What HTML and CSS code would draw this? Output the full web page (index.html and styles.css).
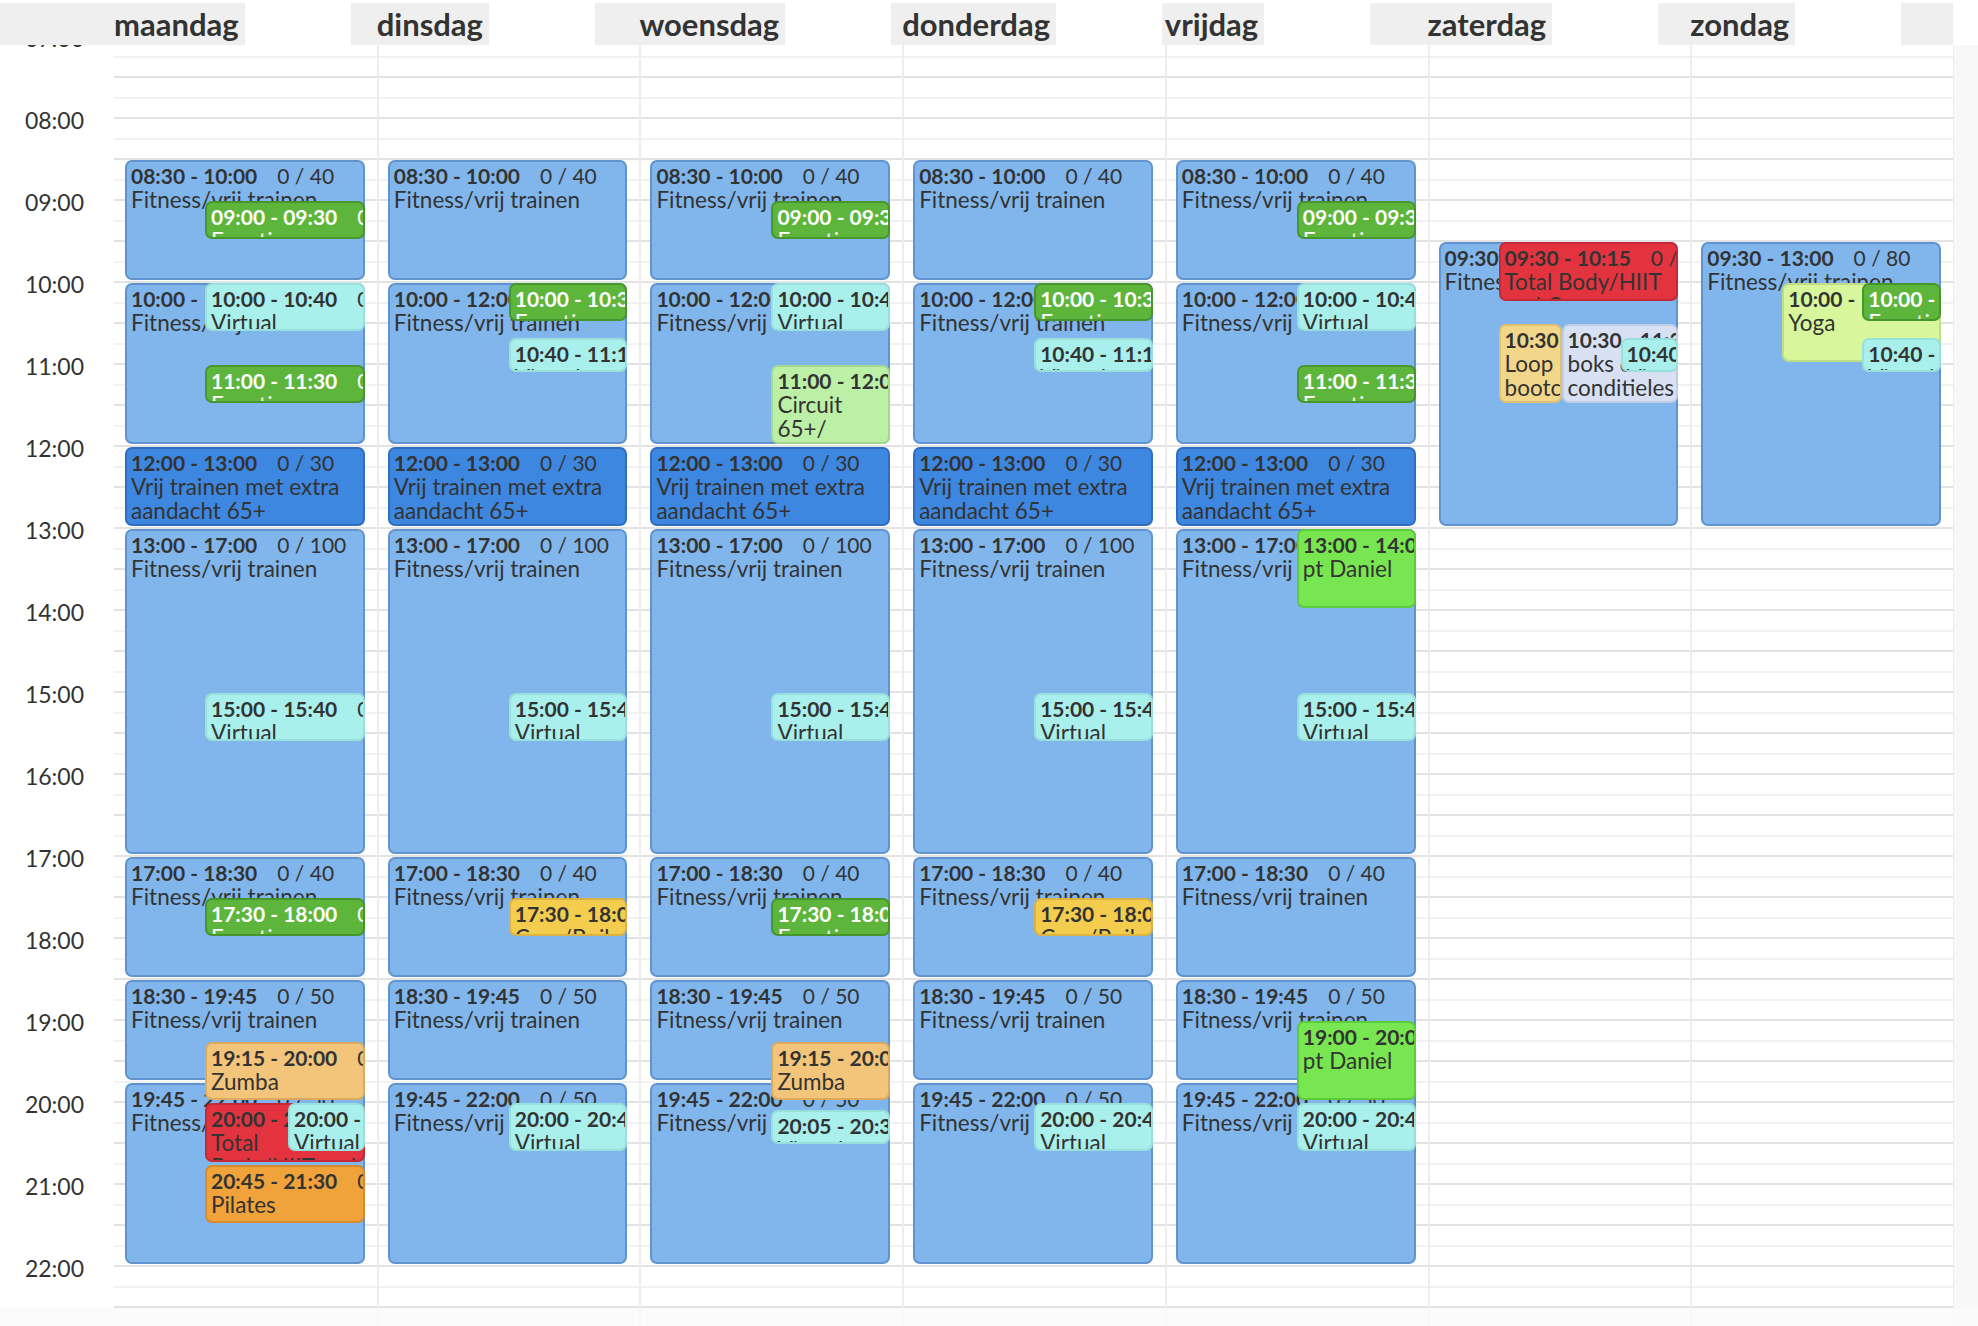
FILE: index.html
```html
<!DOCTYPE html>
<html lang="nl">
<head>
<meta charset="utf-8">
<title>Rooster</title>
<link rel="stylesheet" href="styles.css">
</head>
<body>
<div class="cal">
  <div class="head">
    <div class="head-gutter"></div>
    <div class="day-h"><span class="dn">maandag</span><span class="blank"></span></div>
    <div class="day-h"><span class="dn">dinsdag</span><span class="blank"></span></div>
    <div class="day-h"><span class="dn">woensdag</span><span class="blank"></span></div>
    <div class="day-h"><span class="dn">donderdag</span><span class="blank"></span></div>
    <div class="day-h"><span class="dn">vrijdag</span><span class="blank"></span></div>
    <div class="day-h"><span class="dn">zaterdag</span><span class="blank"></span></div>
    <div class="day-h"><span class="dn">zondag</span><span class="blank"></span></div>
    <div class="head-end"></div>
  </div>
  <div class="body">
    <div class="track">
      <div class="times">
        <div class="hour"><span>07:00</span></div>
        <div class="hour"><span>08:00</span></div>
        <div class="hour"><span>09:00</span></div>
        <div class="hour"><span>10:00</span></div>
        <div class="hour"><span>11:00</span></div>
        <div class="hour"><span>12:00</span></div>
        <div class="hour"><span>13:00</span></div>
        <div class="hour"><span>14:00</span></div>
        <div class="hour"><span>15:00</span></div>
        <div class="hour"><span>16:00</span></div>
        <div class="hour"><span>17:00</span></div>
        <div class="hour"><span>18:00</span></div>
        <div class="hour"><span>19:00</span></div>
        <div class="hour"><span>20:00</span></div>
        <div class="hour"><span>21:00</span></div>
        <div class="hour"><span>22:00</span></div>
      </div>
      <div class="days">
        <!-- maandag -->
        <div class="day">
          <div class="ev fit" style="--s:8.5;--e:10"><div class="t"><b>08:30 - 10:00</b><span class="c">0 / 40</span></div><div class="n">Fitness/vrij trainen</div></div>
          <div class="ev fit" style="--s:10;--e:12"><div class="t"><b>10:00 - 12:00</b><span class="c">0 / 40</span></div><div class="n">Fitness/vrij trainen</div></div>
          <div class="ev senior" style="--s:12;--e:13"><div class="t"><b>12:00 - 13:00</b><span class="c">0 / 30</span></div><div class="n">Vrij trainen met extra aandacht 65+</div></div>
          <div class="ev fit" style="--s:13;--e:17"><div class="t"><b>13:00 - 17:00</b><span class="c">0 / 100</span></div><div class="n">Fitness/vrij trainen</div></div>
          <div class="ev fit" style="--s:17;--e:18.5"><div class="t"><b>17:00 - 18:30</b><span class="c">0 / 40</span></div><div class="n">Fitness/vrij trainen</div></div>
          <div class="ev fit" style="--s:18.5;--e:19.75"><div class="t"><b>18:30 - 19:45</b><span class="c">0 / 50</span></div><div class="n">Fitness/vrij trainen</div></div>
          <div class="ev fit" style="--s:19.75;--e:22"><div class="t"><b>19:45 - 22:00</b><span class="c">0 / 50</span></div><div class="n">Fitness/vrij trainen</div></div>
          <div class="ev func m1" style="--s:9;--e:9.5"><div class="t"><b>09:00 - 09:30</b><span class="c">0 / 15</span></div><div class="n">Function Move</div></div>
          <div class="ev virt m1" style="--s:10;--e:10.6667"><div class="t"><b>10:00 - 10:40</b><span class="c">0 / 20</span></div><div class="n">Virtual</div></div>
          <div class="ev func m1" style="--s:11;--e:11.5"><div class="t"><b>11:00 - 11:30</b><span class="c">0 / 15</span></div><div class="n">Function Move</div></div>
          <div class="ev virt m1" style="--s:15;--e:15.6667"><div class="t"><b>15:00 - 15:40</b><span class="c">0 / 20</span></div><div class="n">Virtual</div></div>
          <div class="ev func m1" style="--s:17.5;--e:18"><div class="t"><b>17:30 - 18:00</b><span class="c">0 / 15</span></div><div class="n">Function Move</div></div>
          <div class="ev zumba m1" style="--s:19.25;--e:20"><div class="t"><b>19:15 - 20:00</b><span class="c">0 / 25</span></div><div class="n">Zumba</div></div>
          <div class="ev hiit m1" style="--s:20;--e:20.75"><div class="t"><b>20:00 - 20:45</b><span class="c">0 / 20</span></div><div class="n">Total Body/HIIT and Core</div></div>
          <div class="ev pilates m1" style="--s:20.75;--e:21.5"><div class="t"><b>20:45 - 21:30</b><span class="c">0 / 20</span></div><div class="n">Pilates</div></div>
          <div class="ev virt m2" style="--s:20;--e:20.6667"><div class="t"><b>20:00 - 20:40</b><span class="c">0 / 20</span></div><div class="n">Virtual</div></div>
        </div>
        <!-- dinsdag -->
        <div class="day">
          <div class="ev fit" style="--s:8.5;--e:10"><div class="t"><b>08:30 - 10:00</b><span class="c">0 / 40</span></div><div class="n">Fitness/vrij trainen</div></div>
          <div class="ev fit" style="--s:10;--e:12"><div class="t"><b>10:00 - 12:00</b><span class="c">0 / 40</span></div><div class="n">Fitness/vrij trainen</div></div>
          <div class="ev senior" style="--s:12;--e:13"><div class="t"><b>12:00 - 13:00</b><span class="c">0 / 30</span></div><div class="n">Vrij trainen met extra aandacht 65+</div></div>
          <div class="ev fit" style="--s:13;--e:17"><div class="t"><b>13:00 - 17:00</b><span class="c">0 / 100</span></div><div class="n">Fitness/vrij trainen</div></div>
          <div class="ev fit" style="--s:17;--e:18.5"><div class="t"><b>17:00 - 18:30</b><span class="c">0 / 40</span></div><div class="n">Fitness/vrij trainen</div></div>
          <div class="ev fit" style="--s:18.5;--e:19.75"><div class="t"><b>18:30 - 19:45</b><span class="c">0 / 50</span></div><div class="n">Fitness/vrij trainen</div></div>
          <div class="ev fit" style="--s:19.75;--e:22"><div class="t"><b>19:45 - 22:00</b><span class="c">0 / 50</span></div><div class="n">Fitness/vrij trainen</div></div>
          <div class="ev func k1" style="--s:10;--e:10.5"><div class="t"><b>10:00 - 10:30</b><span class="c">0 / 15</span></div><div class="n">Function Move</div></div>
          <div class="ev virt k1" style="--s:10.6667;--e:11.1667"><div class="t"><b>10:40 - 11:10</b><span class="c">0 / 20</span></div><div class="n">Virtual</div></div>
          <div class="ev virt k1" style="--s:15;--e:15.6667"><div class="t"><b>15:00 - 15:40</b><span class="c">0 / 20</span></div><div class="n">Virtual</div></div>
          <div class="ev core k1" style="--s:17.5;--e:18"><div class="t"><b>17:30 - 18:00</b><span class="c">0 / 15</span></div><div class="n">Core/Buik</div></div>
          <div class="ev virt k1" style="--s:20;--e:20.6667"><div class="t"><b>20:00 - 20:40</b><span class="c">0 / 20</span></div><div class="n">Virtual</div></div>
        </div>
        <!-- woensdag -->
        <div class="day">
          <div class="ev fit" style="--s:8.5;--e:10"><div class="t"><b>08:30 - 10:00</b><span class="c">0 / 40</span></div><div class="n">Fitness/vrij trainen</div></div>
          <div class="ev fit" style="--s:10;--e:12"><div class="t"><b>10:00 - 12:00</b><span class="c">0 / 40</span></div><div class="n">Fitness/vrij trainen</div></div>
          <div class="ev senior" style="--s:12;--e:13"><div class="t"><b>12:00 - 13:00</b><span class="c">0 / 30</span></div><div class="n">Vrij trainen met extra aandacht 65+</div></div>
          <div class="ev fit" style="--s:13;--e:17"><div class="t"><b>13:00 - 17:00</b><span class="c">0 / 100</span></div><div class="n">Fitness/vrij trainen</div></div>
          <div class="ev fit" style="--s:17;--e:18.5"><div class="t"><b>17:00 - 18:30</b><span class="c">0 / 40</span></div><div class="n">Fitness/vrij trainen</div></div>
          <div class="ev fit" style="--s:18.5;--e:19.75"><div class="t"><b>18:30 - 19:45</b><span class="c">0 / 50</span></div><div class="n">Fitness/vrij trainen</div></div>
          <div class="ev fit" style="--s:19.75;--e:22"><div class="t"><b>19:45 - 22:00</b><span class="c">0 / 50</span></div><div class="n">Fitness/vrij trainen</div></div>
          <div class="ev func k1" style="--s:9;--e:9.5"><div class="t"><b>09:00 - 09:30</b><span class="c">0 / 15</span></div><div class="n">Function Move</div></div>
          <div class="ev virt k1" style="--s:10;--e:10.6667"><div class="t"><b>10:00 - 10:40</b><span class="c">0 / 20</span></div><div class="n">Virtual</div></div>
          <div class="ev circuit k1" style="--s:11;--e:12"><div class="t"><b>11:00 - 12:00</b><span class="c">0 / 15</span></div><div class="n">Circuit 65+/ Functional</div></div>
          <div class="ev virt k1" style="--s:15;--e:15.6667"><div class="t"><b>15:00 - 15:40</b><span class="c">0 / 20</span></div><div class="n">Virtual</div></div>
          <div class="ev func k1" style="--s:17.5;--e:18"><div class="t"><b>17:30 - 18:00</b><span class="c">0 / 15</span></div><div class="n">Function Move</div></div>
          <div class="ev zumba k1" style="--s:19.25;--e:20"><div class="t"><b>19:15 - 20:00</b><span class="c">0 / 25</span></div><div class="n">Zumba</div></div>
          <div class="ev virt k1" style="--s:20.0833;--e:20.5833"><div class="t"><b>20:05 - 20:35</b><span class="c">0 / 20</span></div><div class="n">Virtual</div></div>
        </div>
        <!-- donderdag -->
        <div class="day">
          <div class="ev fit" style="--s:8.5;--e:10"><div class="t"><b>08:30 - 10:00</b><span class="c">0 / 40</span></div><div class="n">Fitness/vrij trainen</div></div>
          <div class="ev fit" style="--s:10;--e:12"><div class="t"><b>10:00 - 12:00</b><span class="c">0 / 40</span></div><div class="n">Fitness/vrij trainen</div></div>
          <div class="ev senior" style="--s:12;--e:13"><div class="t"><b>12:00 - 13:00</b><span class="c">0 / 30</span></div><div class="n">Vrij trainen met extra aandacht 65+</div></div>
          <div class="ev fit" style="--s:13;--e:17"><div class="t"><b>13:00 - 17:00</b><span class="c">0 / 100</span></div><div class="n">Fitness/vrij trainen</div></div>
          <div class="ev fit" style="--s:17;--e:18.5"><div class="t"><b>17:00 - 18:30</b><span class="c">0 / 40</span></div><div class="n">Fitness/vrij trainen</div></div>
          <div class="ev fit" style="--s:18.5;--e:19.75"><div class="t"><b>18:30 - 19:45</b><span class="c">0 / 50</span></div><div class="n">Fitness/vrij trainen</div></div>
          <div class="ev fit" style="--s:19.75;--e:22"><div class="t"><b>19:45 - 22:00</b><span class="c">0 / 50</span></div><div class="n">Fitness/vrij trainen</div></div>
          <div class="ev func k1" style="--s:10;--e:10.5"><div class="t"><b>10:00 - 10:30</b><span class="c">0 / 15</span></div><div class="n">Function Move</div></div>
          <div class="ev virt k1" style="--s:10.6667;--e:11.1667"><div class="t"><b>10:40 - 11:10</b><span class="c">0 / 20</span></div><div class="n">Virtual</div></div>
          <div class="ev virt k1" style="--s:15;--e:15.6667"><div class="t"><b>15:00 - 15:40</b><span class="c">0 / 20</span></div><div class="n">Virtual</div></div>
          <div class="ev core k1" style="--s:17.5;--e:18"><div class="t"><b>17:30 - 18:00</b><span class="c">0 / 15</span></div><div class="n">Core/Buik</div></div>
          <div class="ev virt k1" style="--s:20;--e:20.6667"><div class="t"><b>20:00 - 20:40</b><span class="c">0 / 20</span></div><div class="n">Virtual</div></div>
        </div>
        <!-- vrijdag -->
        <div class="day">
          <div class="ev fit" style="--s:8.5;--e:10"><div class="t"><b>08:30 - 10:00</b><span class="c">0 / 40</span></div><div class="n">Fitness/vrij trainen</div></div>
          <div class="ev fit" style="--s:10;--e:12"><div class="t"><b>10:00 - 12:00</b><span class="c">0 / 40</span></div><div class="n">Fitness/vrij trainen</div></div>
          <div class="ev senior" style="--s:12;--e:13"><div class="t"><b>12:00 - 13:00</b><span class="c">0 / 30</span></div><div class="n">Vrij trainen met extra aandacht 65+</div></div>
          <div class="ev fit" style="--s:13;--e:17"><div class="t"><b>13:00 - 17:00</b><span class="c">0 / 100</span></div><div class="n">Fitness/vrij trainen</div></div>
          <div class="ev fit" style="--s:17;--e:18.5"><div class="t"><b>17:00 - 18:30</b><span class="c">0 / 40</span></div><div class="n">Fitness/vrij trainen</div></div>
          <div class="ev fit" style="--s:18.5;--e:19.75"><div class="t"><b>18:30 - 19:45</b><span class="c">0 / 50</span></div><div class="n">Fitness/vrij trainen</div></div>
          <div class="ev fit" style="--s:19.75;--e:22"><div class="t"><b>19:45 - 22:00</b><span class="c">0 / 50</span></div><div class="n">Fitness/vrij trainen</div></div>
          <div class="ev func k1" style="--s:9;--e:9.5"><div class="t"><b>09:00 - 09:30</b><span class="c">0 / 15</span></div><div class="n">Function Move</div></div>
          <div class="ev virt k1" style="--s:10;--e:10.6667"><div class="t"><b>10:00 - 10:40</b><span class="c">0 / 20</span></div><div class="n">Virtual</div></div>
          <div class="ev func k1" style="--s:11;--e:11.5"><div class="t"><b>11:00 - 11:30</b><span class="c">0 / 15</span></div><div class="n">Function Move</div></div>
          <div class="ev pt k1" style="--s:13;--e:14"><div class="t"><b>13:00 - 14:00</b><span class="c">0 / 1</span></div><div class="n">pt Daniel</div></div>
          <div class="ev virt k1" style="--s:15;--e:15.6667"><div class="t"><b>15:00 - 15:40</b><span class="c">0 / 20</span></div><div class="n">Virtual</div></div>
          <div class="ev pt k1" style="--s:19;--e:20"><div class="t"><b>19:00 - 20:00</b><span class="c">0 / 1</span></div><div class="n">pt Daniel</div></div>
          <div class="ev virt k1" style="--s:20;--e:20.6667"><div class="t"><b>20:00 - 20:40</b><span class="c">0 / 20</span></div><div class="n">Virtual</div></div>
        </div>
        <!-- zaterdag -->
        <div class="day">
          <div class="ev fit" style="--s:9.5;--e:13"><div class="t"><b>09:30 - 13:00</b><span class="c">0 / 80</span></div><div class="n">Fitness/vrij trainen</div></div>
          <div class="ev hiit s1" style="--s:9.5;--e:10.25"><div class="t"><b>09:30 - 10:15</b><span class="c">0 / 20</span></div><div class="n">Total Body/HIIT and Core</div></div>
          <div class="ev loop s1" style="--s:10.5;--e:11.5"><div class="t"><b>10:30 - 11:30</b><span class="c">0 / 20</span></div><div class="n">Loop bootcamp</div></div>
          <div class="ev boks s2" style="--s:10.5;--e:11.5"><div class="t"><b>10:30 - 11:30</b><span class="c">0 / 20</span></div><div class="n">boks en conditieles</div></div>
          <div class="ev virt s3" style="--s:10.6667;--e:11.1667"><div class="t"><b>10:40 - 11:10</b><span class="c">0 / 20</span></div><div class="n">Virtual</div></div>
        </div>
        <!-- zondag -->
        <div class="day">
          <div class="ev fit" style="--s:9.5;--e:13"><div class="t"><b>09:30 - 13:00</b><span class="c">0 / 80</span></div><div class="n">Fitness/vrij trainen</div></div>
          <div class="ev yoga u1" style="--s:10;--e:11"><div class="t"><b>10:00 - 11:00</b><span class="c">0 / 20</span></div><div class="n">Yoga</div></div>
          <div class="ev func u2" style="--s:10;--e:10.5"><div class="t"><b>10:00 - 10:30</b><span class="c">0 / 15</span></div><div class="n">Function Move</div></div>
          <div class="ev virt u2" style="--s:10.6667;--e:11.1667"><div class="t"><b>10:40 - 11:10</b><span class="c">0 / 20</span></div><div class="n">Virtual</div></div>
        </div>
      </div>
      <div class="vbar"></div>
    </div>
    <div class="hbar"></div>
  </div>
</div>
</body>
</html>
```

FILE: styles.css
```css
* { box-sizing: border-box; }

html, body {
  margin: 0;
  padding: 0;
}

body {
  width: 1978px;
  height: 1326px;
  overflow: hidden;
  background: #ffffff;
  font-family: Lato, "Noto Sans", sans-serif;
  color: #333333;
}

.cal {
  display: flex;
  flex-direction: column;
  height: 1326px;
}

/* ---------- header ---------- */
.head {
  position: relative;
  z-index: 5;
  flex: none;
  display: grid;
  grid-template-columns: 114px repeat(7, 1fr) 25px;
  height: 42px;
  margin-top: 3px;
}

.head-gutter,
.day-h {
  background: #efefef;
}

.day-h {
  display: flex;
  align-items: stretch;
  overflow: hidden;
}

.dn {
  font-size: 31px;
  font-weight: 700;
  line-height: 42px;
  color: #333333;
  white-space: nowrap;
}

.blank {
  flex: none;
  width: 106px;
  margin-left: 6px;
  background: #ffffff;
}

.head-end {
  background: #ffffff;
}

/* ---------- body ---------- */
.body {
  flex: 1;
  position: relative;
  overflow: hidden;
}

.track {
  display: grid;
  grid-template-columns: 114px 1fr 25px;
  height: 1312px;
  margin-top: -9px;
}

.times {
  display: flex;
  flex-direction: column;
}

.hour {
  flex: none;
  height: 82px;
}

.hour span {
  display: block;
  margin-top: -10px;
  margin-right: 5px;
  text-align: center;
  font-size: 23px;
  line-height: 24px;
  color: #333333;
}

.days {
  display: grid;
  grid-template-columns: repeat(7, 1fr);
  background-image: repeating-linear-gradient(to bottom,
    #e3e3e3 0px, #e3e3e3 2px,
    transparent 2px, transparent 20.5px,
    #f2f2f2 20.5px, #f2f2f2 22.5px,
    transparent 22.5px, transparent 41px);
  background-position: 0 -1px;
}

.day {
  position: relative;
}

.day + .day {
  box-shadow: inset 2px 0 0 #ededed;
}

.vbar {
  background: #f8f8f8;
  box-shadow: inset 1px 0 0 #ededed;
}

.hbar {
  position: absolute;
  left: 0;
  right: 0;
  bottom: 0;
  height: 18px;
  background: rgba(250, 250, 250, 0.8);
  z-index: 6;
}

/* ---------- events ---------- */
.ev {
  position: absolute;
  top: calc((var(--s) - 7) * 82px + 1px);
  height: calc((var(--e) - var(--s)) * 82px - 3px);
  left: 11px;
  right: 12px;
  z-index: 1;
  overflow: hidden;
  border: 2px solid #5f90cc;
  border-radius: 7px;
  padding: 2px 4px 0;
  font-size: 21px;
  line-height: 24px;
  color: #333333;
}

.ev .t {
  white-space: nowrap;
}

.ev .t b {
  font-weight: 700;
}

.ev .c {
  margin-left: 20px;
}

.ev .n {
  font-size: 22.5px;
}

/* levels */
.m1 { left: 91px; z-index: 2; }
.m2 { left: 174px; z-index: 3; }
.k1 { left: 132px; z-index: 2; }
.s1 { left: 71px; z-index: 2; }
.s2 { left: 134px; z-index: 3; }
.s3 { left: 193px; z-index: 4; }
.u1 { left: 92px; z-index: 2; }
.u2 { left: 172px; z-index: 3; }

/* colours */
.fit { background: #80b6ec; border-color: #6193cf; }
.senior { background: #3e87e0; border-color: #2f6dbf; }
.func { background: #5db63b; border-color: #47962d; color: #ffffff; }
.virt {
  background: #a9efeb;
  border-color: #98e0dc;
  height: calc((var(--e) - var(--s)) * 82px - 7px);
}
.core { background: #f4cd4f; border-color: #dbb245; }
.zumba { background: #f2c57b; border-color: #dcaa5e; }
.pilates { background: #f0a23b; border-color: #d88a2f; }
.hiit { background: #e3333f; border-color: #c52935; }
.circuit { background: #bdf0a7; border-color: #a3d88e; }
.pt { background: #77e650; border-color: #5ccb3c; }
.yoga { background: #d8f79c; border-color: #bfdc86; }
.loop { background: #f2d78b; border-color: #ddc072; right: 128px; }
.boks { background: #d8e1f4; border-color: #c1cde6; }
```
